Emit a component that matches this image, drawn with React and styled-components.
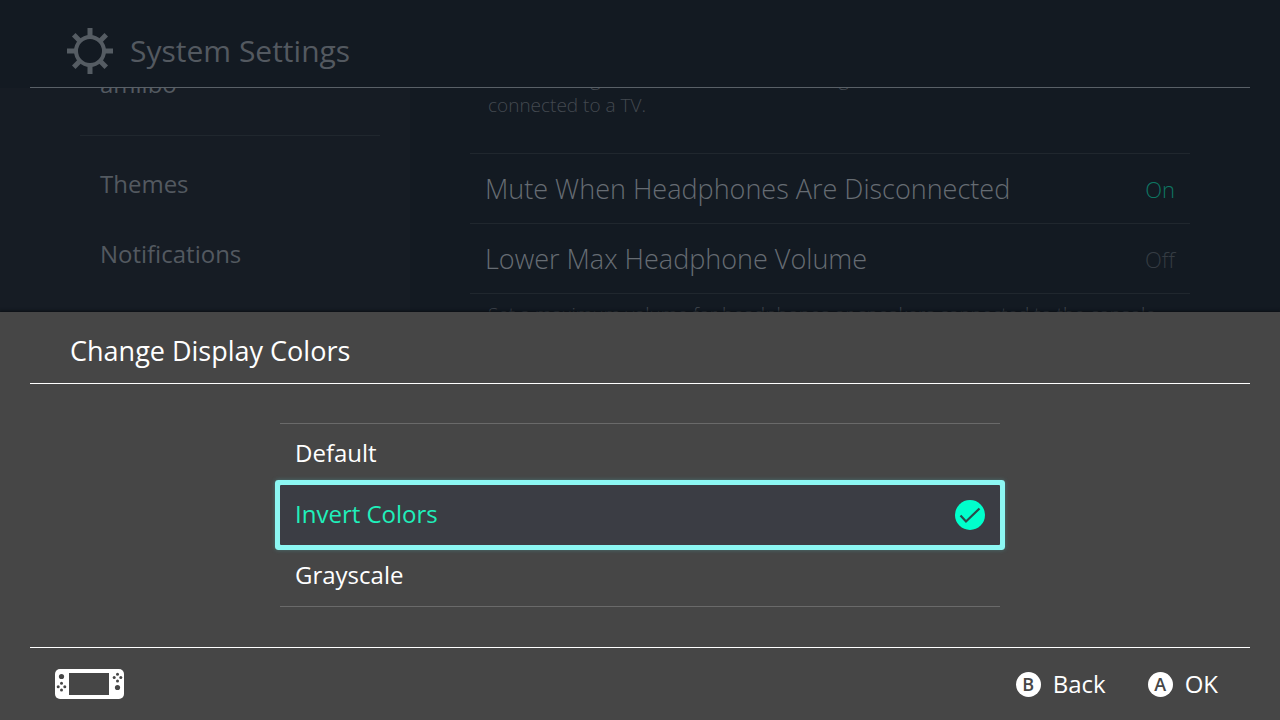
import React, { useState } from "react";
import styled, { createGlobalStyle } from "styled-components";

const GlobalStyle = createGlobalStyle`
  * {
    box-sizing: border-box;
  }
  body {
    margin: 0;
    background: #464646;
    font-family: "Open Sans", "Noto Sans", sans-serif;
  }
  h1, h2, p, ul {
    margin: 0;
    padding: 0;
    font-weight: inherit;
  }
  ul {
    list-style: none;
  }
`;

const Screen = styled.div`
  height: 100vh;
  display: flex;
  flex-direction: column;
  overflow: hidden;
`;

const Settings = styled.main`
  flex: 1;
  min-height: 0;
  display: flex;
  flex-direction: column;
  background: #131a22;
  color: #535960;
`;

const SettingsHeader = styled.header`
  flex: none;
  height: 88px;
  margin: 0 30px;
  padding: 14px 36px 0;
  display: flex;
  align-items: center;
  gap: 16px;
  border-bottom: 1px solid #596067;

  h1 {
    font-size: 30px;
    line-height: 40px;
  }
`;

const SettingsBody = styled.div`
  flex: 1;
  min-height: 0;
  display: flex;
  overflow: hidden;
`;

const Sidebar = styled.nav`
  flex: 0 0 410px;
  padding: 0 30px 0 80px;
  background: #161c24;

  ul {
    margin-top: -38px;
  }
`;

const SidebarItem = styled.li`
  a {
    display: flex;
    align-items: center;
    height: 70px;
    padding: 0 20px 4px;
    color: inherit;
    font-size: 24px;
    text-decoration: none;
  }
`;

const SidebarDivider = styled.li`
  height: 1px;
  margin: 15px 0 14px;
  background: #20272e;
`;

const Panel = styled.section`
  flex: 1;
  padding: 0 90px 0 60px;
  font-weight: 300;
`;

const Help = styled.p`
  margin-top: ${({ $scrolled }) => ($scrolled ? "-22px" : "7px")};
  padding: 0 18px;
  color: #434950;
  font-size: 19px;
  line-height: 26px;
`;

const PanelRows = styled.div`
  margin-top: 35px;
  border-bottom: 1px solid #20272e;
`;

const PanelRow = styled.button`
  display: flex;
  align-items: center;
  justify-content: space-between;
  width: 100%;
  height: 70px;
  padding: 0 15px;
  border: 0;
  border-top: 1px solid #20272e;
  background: none;
  color: #666c73;
  font: inherit;
  font-size: 27px;
`;

const RowValue = styled.span`
  color: ${({ $on }) => ($on ? "#0e7662" : "#353c43")};
  font-size: 22px;
`;

const Sheet = styled.section`
  flex: none;
  background: #464646;
  box-shadow: 0 0 3px 1px #0a0e13;
  color: #fff;
`;

const SheetTitle = styled.h2`
  height: 72px;
  margin: 0 30px;
  padding: 6px 40px 0;
  border-bottom: 1px solid #fff;
  font-size: 27px;
  line-height: 66px;
`;

const Options = styled.div`
  max-width: 720px;
  margin: 39px auto 40px;
  border-bottom: 1px solid #6a6a6a;
`;

const Option = styled.label`
  display: flex;
  align-items: center;
  height: 61px;
  padding: 0 15px;
  border-top: 1px solid ${({ $first }) => ($first ? "#6a6a6a" : "transparent")};
  color: #fff;
  font-size: 24px;
  cursor: pointer;

  input {
    appearance: none;
    width: 0;
    height: 0;
    margin: 0;
  }
`;

const SelectedOption = styled(Option)`
  height: 60px;
  margin-top: 1px;
  border: 0;
  border-radius: 1px;
  background: #3b3d44;
  box-shadow: 0 0 0 5px #8cf7f3, 0 0 4px 5px rgba(80, 200, 200, 0.35);
  color: #1fefbb;
`;

const OptionName = styled.span`
  flex: 1;
  padding-bottom: 4px;
`;

const SheetFooter = styled.footer`
  display: flex;
  align-items: center;
  justify-content: space-between;
  height: 73px;
  margin: 0 30px;
  padding: 0 32px 0 25px;
  border-top: 1px solid #fff;
`;

const Actions = styled.div`
  display: flex;
  gap: 42px;
`;

const ActionButton = styled.button`
  display: flex;
  align-items: center;
  gap: 12px;
  padding: 0;
  border: 0;
  background: none;
  color: #fff;
  font: inherit;
  font-size: 24px;
  line-height: 34px;
`;

const Key = styled.span`
  width: 25px;
  height: 25px;
  border-radius: 50%;
  background: #fff;
  color: #464646;
  font-size: 18px;
  font-weight: 600;
  line-height: 25px;
  text-align: center;
`;

const GearIcon = () => (
  <svg width="48" height="48" viewBox="-24 -24 48 48" fill="none" stroke="#555c63" aria-hidden="true">
    <circle r="14" strokeWidth="4" />
    {[0, 45, 90, 135, 180, 225, 270, 315].map((angle) => (
      <path key={angle} d="M0 -15V-23" strokeWidth="5" transform={`rotate(${angle})`} />
    ))}
  </svg>
);

const CheckIcon = () => (
  <svg width="30" height="30" viewBox="0 0 30 30" aria-hidden="true">
    <circle cx="15" cy="15" r="15" fill="#0fc" />
    <path d="M5.5 15.5L11 21.5L24.5 8.5" fill="none" stroke="#2b4a4b" strokeWidth="2.2" />
  </svg>
);

const ConsoleIcon = () => (
  <svg width="69" height="30" viewBox="0 0 69 30" aria-label="Handheld mode" role="img">
    <rect width="69" height="30" rx="5" fill="#fff" />
    <g fill="#464646">
      <rect x="14" y="4" width="40" height="22" />
      <circle cx="6.5" cy="7.5" r="2.6" />
      <circle cx="62.5" cy="18.5" r="2.6" />
      <circle cx="6.5" cy="14.3" r="1.5" />
      <circle cx="6.5" cy="21" r="1.5" />
      <circle cx="3.2" cy="17.7" r="1.5" />
      <circle cx="9.8" cy="17.7" r="1.5" />
      <circle cx="62.5" cy="5.3" r="1.5" />
      <circle cx="62.5" cy="11.9" r="1.5" />
      <circle cx="59.2" cy="8.6" r="1.5" />
      <circle cx="65.8" cy="8.6" r="1.5" />
    </g>
  </svg>
);

const options = ["Default", "Invert Colors", "Grayscale"];

const App = () => {
  const [selected, setSelected] = useState("Invert Colors");

  return (
    <Screen>
      <GlobalStyle />
      <Settings>
        <SettingsHeader>
          <GearIcon />
          <h1>System Settings</h1>
        </SettingsHeader>
        <SettingsBody>
          <Sidebar>
            <ul>
              <SidebarItem><a href="#amiibo">amiibo</a></SidebarItem>
              <SidebarDivider />
              <SidebarItem><a href="#themes">Themes</a></SidebarItem>
              <SidebarItem><a href="#notifications">Notifications</a></SidebarItem>
            </ul>
          </Sidebar>
          <Panel>
            <Help $scrolled>
              The following volumes are not to be changed if
              <br />
              connected to a TV.
            </Help>
            <PanelRows>
              <PanelRow>
                Mute When Headphones Are Disconnected
                <RowValue $on>On</RowValue>
              </PanelRow>
              <PanelRow>
                Lower Max Headphone Volume
                <RowValue>Off</RowValue>
              </PanelRow>
            </PanelRows>
            <Help>Set a maximum volume for headphones or speakers connected to the console</Help>
          </Panel>
        </SettingsBody>
      </Settings>
      <Sheet>
        <SheetTitle>Change Display Colors</SheetTitle>
        <Options role="radiogroup" aria-label="Change Display Colors">
          {options.map((name, i) => {
            const Item = name === selected ? SelectedOption : Option;
            return (
              <Item key={name} $first={i === 0}>
                <input
                  type="radio"
                  name="colors"
                  checked={name === selected}
                  onChange={() => setSelected(name)}
                />
                <OptionName>{name}</OptionName>
                {name === selected && <CheckIcon />}
              </Item>
            );
          })}
        </Options>
        <SheetFooter>
          <ConsoleIcon />
          <Actions>
            <ActionButton><Key>B</Key>Back</ActionButton>
            <ActionButton><Key>A</Key>OK</ActionButton>
          </Actions>
        </SheetFooter>
      </Sheet>
    </Screen>
  );
};

export default App;
